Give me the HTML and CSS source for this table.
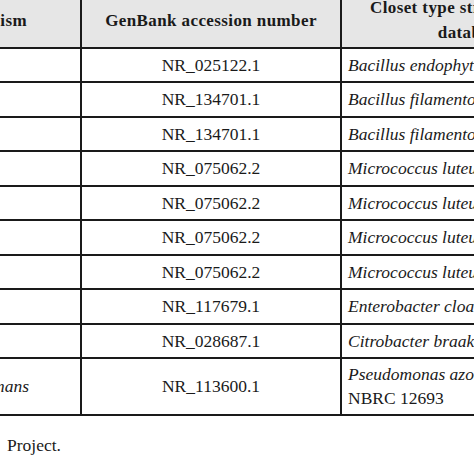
FILE: index.html
```html
<!DOCTYPE html>
<html lang="en">
<head>
<meta charset="utf-8">
<title>Table</title>
<link rel="stylesheet" href="styles.css">
</head>
<body>
<div class="page">
  <table class="data">
    <colgroup>
      <col class="c1">
      <col class="c2">
      <col class="c3">
    </colgroup>
    <thead>
      <tr class="head">
        <th class="org">Microorganism</th>
        <th class="acc">GenBank accession number</th>
        <th class="type">Closet type strain in NCBI<br>database</th>
      </tr>
    </thead>
    <tbody>
      <tr><td class="org"></td><td class="acc">NR_025122.1</td><td class="type"><i>Bacillus endophyticus</i> 2DT</td></tr>
      <tr><td class="org"></td><td class="acc">NR_134701.1</td><td class="type"><i>Bacillus filamentosus</i> SGD-14</td></tr>
      <tr><td class="org"></td><td class="acc">NR_134701.1</td><td class="type"><i>Bacillus filamentosus</i> SGD-14</td></tr>
      <tr><td class="org"></td><td class="acc">NR_075062.2</td><td class="type"><i>Micrococcus luteus</i> NCTC 2665</td></tr>
      <tr><td class="org"></td><td class="acc">NR_075062.2</td><td class="type"><i>Micrococcus luteus</i> NCTC 2665</td></tr>
      <tr><td class="org"></td><td class="acc">NR_075062.2</td><td class="type"><i>Micrococcus luteus</i> NCTC 2665</td></tr>
      <tr><td class="org"></td><td class="acc">NR_075062.2</td><td class="type"><i>Micrococcus luteus</i> NCTC 2665</td></tr>
      <tr><td class="org"></td><td class="acc">NR_117679.1</td><td class="type"><i>Enterobacter cloacae</i> ATCC 13047</td></tr>
      <tr><td class="org"></td><td class="acc">NR_028687.1</td><td class="type"><i>Citrobacter braakii</i> CDC 080-58</td></tr>
      <tr class="tall"><td class="org"><i>Pseudomonas azotoformans</i></td><td class="acc">NR_113600.1</td><td class="type"><i>Pseudomonas azotoformans</i><br>NBRC 12693</td></tr>
    </tbody>
  </table>
  <p class="note">Project.</p>
</div>
</body>
</html>
```

FILE: styles.css
```css
html, body {
  margin: 0;
  padding: 0;
  background: #ffffff;
  overflow: hidden;
}
.page {
  width: 474px;
  height: 474px;
  overflow: hidden;
  font-family: "Liberation Serif", "Times New Roman", serif;
  color: #1a1a1a;
  font-size: 17.5px;
}
.data {
  border-collapse: collapse;
  table-layout: fixed;
  width: 821px;
  margin-left: -220px;
  margin-top: -6px;
}
.c1 { width: 300px; }
.c2 { width: 260px; }
.c3 { width: 261px; }
.data th,
.data td {
  border: 2px solid #1a1a1a;
  padding: 0;
  line-height: 24px;
  vertical-align: middle;
  white-space: nowrap;
  overflow: hidden;
}
.data th {
  border-top: none;
  background: #e6e6e6;
  font-weight: bold;
  font-size: 17px;
  letter-spacing: 0.4px;
  line-height: 25px;
}
.head { height: 53.5px; }
.data tbody tr { height: 34.5px; }
.data tbody tr.tall { height: 56.5px; }
.org {
  text-align: right;
  padding-right: 51px !important;
}
th.org { padding-right: 53px !important; }
.acc { text-align: center; }
th.type { text-align: center; }
td.type {
  text-align: left;
  padding-left: 6px !important;
}
.note {
  margin: 17px 0 0 7px;
  line-height: 24px;
}
```
